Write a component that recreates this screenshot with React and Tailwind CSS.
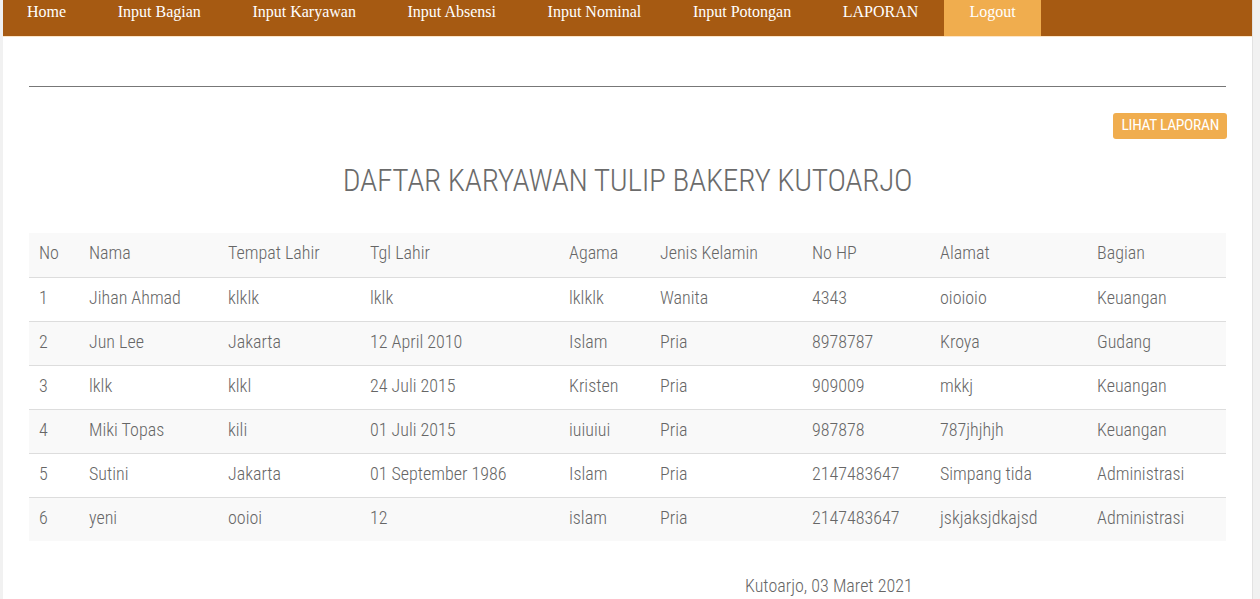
import React from "react";

const menu = ["Home", "Input Bagian", "Input Karyawan", "Input Absensi", "Input Nominal", "Input Potongan", "LAPORAN"];

const cols = [
  { label: "No", w: "w-[50px]" },
  { label: "Nama", w: "w-[139px]" },
  { label: "Tempat Lahir", w: "w-[142px]" },
  { label: "Tgl Lahir", w: "w-[199px]" },
  { label: "Agama", w: "w-[91px]" },
  { label: "Jenis Kelamin", w: "w-[152px]" },
  { label: "No HP", w: "w-[128px]" },
  { label: "Alamat", w: "w-[157px]" },
  { label: "Bagian", w: "" },
];

const rows = [
  ["1", "Jihan Ahmad", "klklk", "lklk", "lklklk", "Wanita", "4343", "oioioio", "Keuangan"],
  ["2", "Jun Lee", "Jakarta", "12 April 2010", "Islam", "Pria", "8978787", "Kroya", "Gudang"],
  ["3", "lklk", "klkl", "24 Juli 2015", "Kristen", "Pria", "909009", "mkkj", "Keuangan"],
  ["4", "Miki Topas", "kili", "01 Juli 2015", "iuiuiui", "Pria", "987878", "787jhjhjh", "Keuangan"],
  ["5", "Sutini", "Jakarta", "01 September 1986", "Islam", "Pria", "2147483647", "Simpang tida", "Administrasi"],
  ["6", "yeni", "ooioi", "12", "islam", "Pria", "2147483647", "jskjaksjdkajsd", "Administrasi"],
];

export default function App() {
  return (
    <div className="min-h-[599px] bg-[#f1f1f1] pr-[7px] pl-[3px]">
      <div className="min-h-[599px] bg-white border-r border-[#e2e2e2]">
        {/* Navbar */}
        <nav className="flex h-[37px] bg-[#a65a12] border-b border-[#fde6c8] font-['Liberation_Serif',serif] text-[16px] text-white">
          {menu.map((m, i) => (
            <a key={m} className={`${i === 0 ? "pl-[24px]" : "pl-[25.8px]"} pr-[25.8px] pt-[3px] leading-[18px]`}>{m}</a>
          ))}
          <a className="px-[25.5px] pt-[3px] leading-[18px] bg-[#f0ad4e]">Logout</a>
        </nav>

        <div className="px-[26px] font-['Roboto',sans-serif] [font-stretch:condensed] font-light text-[#666]">
          <hr className="mt-[49px] border-t border-[#777]" />

          <div className="flex justify-end mt-[26px] -mr-[1px]">
            <button className="h-[26px] px-[8px] rounded-[3px] bg-[#f0ad4e] text-white text-[15.5px] font-normal uppercase tracking-[-0.3px]">
              Lihat Laporan
            </button>
          </div>

          <h2 className="mt-[22px] text-center text-[31.4px] text-[#6b6b6b] tracking-[-0.3px] leading-[40px]">
            DAFTAR KARYAWAN TULIP BAKERY KUTOARJO
          </h2>

          <table className="mt-[32px] w-full table-fixed border-collapse text-[18px] text-left">
            <thead>
              <tr className="bg-[#f9f9f9] h-[44px] border-b border-[#dddddd]">
                {cols.map((c) => (
                  <th key={c.label} className={`${c.w} px-[10px] pb-[4px] font-light`}>{c.label}</th>
                ))}
              </tr>
            </thead>
            <tbody>
              {rows.map((r, i) => (
                <tr key={i} className={`h-[44px] border-t border-[#dddddd] ${i % 2 === 1 ? "bg-[#f9f9f9]" : "bg-white"}`}>
                  {r.map((v, j) => (
                    <td key={j} className="px-[10px] pb-[4px] whitespace-nowrap">{v}</td>
                  ))}
                </tr>
              ))}
            </tbody>
          </table>

          <div className="mt-[34px] pl-[716px] text-[18px] leading-[22px]">Kutoarjo, 03 Maret 2021</div>
        </div>
      </div>
    </div>
  );
}
